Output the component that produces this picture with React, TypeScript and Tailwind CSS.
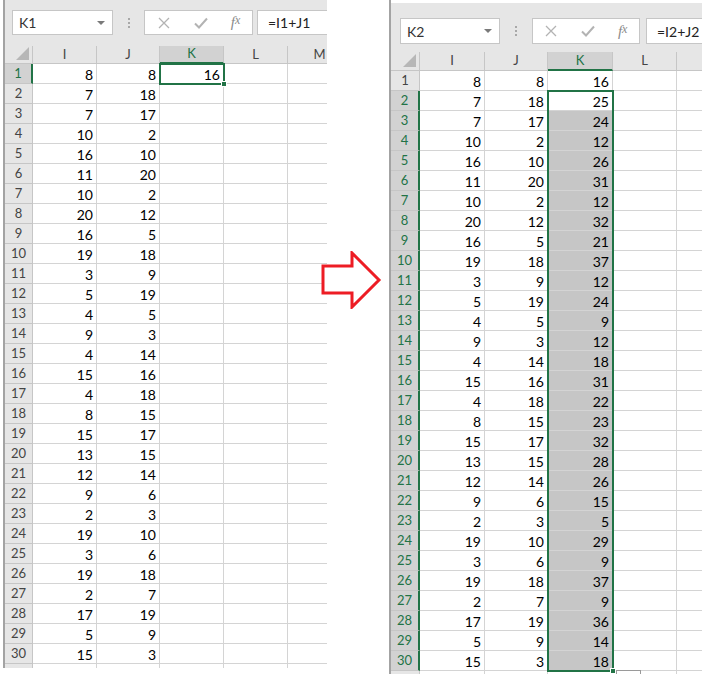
import React from "react";

const DATA: [number, number][] = [
  [8, 8], [7, 18], [7, 17], [10, 2], [16, 10], [11, 20], [10, 2], [20, 12], [16, 5], [19, 18],
  [3, 9], [5, 19], [4, 5], [9, 3], [4, 14], [15, 16], [4, 18], [8, 15], [15, 17], [13, 15],
  [12, 14], [9, 6], [2, 3], [19, 10], [3, 6], [19, 18], [2, 7], [17, 19], [5, 9], [15, 3],
];

const GREEN = "text-[#217346]";

type Col = { name: string; w: string };

type SheetProps = {
  panel: string;
  toolbar: string;
  nameBox: string;
  dots: string;
  fxBox: string;
  formulaBox: string;
  nameRef: string;
  formula: string;
  rowHeadW: string;
  headH: string;
  cols: Col[];
  kRows: number; // how many rows show a value in K
  selFrom: number;
  selTo: number;
  selBox: string;
  fillOptions?: string;
};

function XIcon() {
  return (
    <svg width="14" height="14" viewBox="0 0 14 14">
      <path d="M2 2 L12 12 M12 2 L2 12" stroke="#b3b3b3" strokeWidth="1.3" fill="none" />
    </svg>
  );
}

function CheckIcon() {
  return (
    <svg width="16" height="14" viewBox="0 0 16 14">
      <path d="M2 7.5 L6 11.5 L14 2.5" stroke="#b3b3b3" strokeWidth="2" fill="none" />
    </svg>
  );
}

function Sheet(p: SheetProps) {
  // 30 data rows plus one cut-off row at the bottom
  const rows = Array.from({ length: 31 }, (_, i) => i + 1);
  return (
    <div className={`${p.panel} flex shrink-0 flex-col overflow-hidden border-l-2 border-[#a3a3a3] bg-white`}>
      {/* formula bar */}
      <div className={`${p.toolbar} flex shrink-0 items-start bg-[#e6e6e6]`}>
        <div className={`${p.nameBox} flex shrink-0 items-center justify-between border border-[#c6c6c6] bg-white pl-[6px] pr-[7px] text-[14px] text-[#333]`}>
          <span>{p.nameRef}</span>
          <span className="h-0 w-0 border-x-[4px] border-t-[4px] border-x-transparent border-t-[#7a7a7a]" />
        </div>
        <div className={`${p.dots} flex shrink-0 flex-col items-center justify-center gap-[2px]`}>
          <span className="h-[2px] w-[2px] bg-[#a8a8a8]" />
          <span className="h-[2px] w-[2px] bg-[#a8a8a8]" />
          <span className="h-[2px] w-[2px] bg-[#a8a8a8]" />
        </div>
        <div className={`${p.fxBox} flex shrink-0 items-center border border-[#c6c6c6] bg-white`}>
          <span className="flex w-[37px] justify-center"><XIcon /></span>
          <span className="flex w-[37px] justify-center"><CheckIcon /></span>
          <span className="flex w-[33px] justify-center font-['Liberation_Serif',serif] text-[15px] italic text-[#8a8a8a]">
            f<span className="text-[12px]">x</span>
          </span>
        </div>
        <div className={`${p.formulaBox} flex shrink-0 items-center border border-[#c6c6c6] bg-white pl-[10px] text-[14px] text-[#222]`}>
          {p.formula}
        </div>
      </div>

      {/* column headers */}
      <div className={`${p.headH} flex w-max shrink-0`}>
        <div className={`${p.rowHeadW} relative shrink-0 border-r border-b border-[#c6c6c6] bg-[#e6e6e6]`}>
          <span className="absolute bottom-[3px] right-[3px] h-0 w-0 border-b-[13px] border-l-[13px] border-l-transparent border-b-[#b7b7b7]" />
        </div>
        {p.cols.map((c, i) => (
          <div
            key={c.name + i}
            className={`${c.w} flex shrink-0 items-center justify-center border-r border-[#c6c6c6] text-[13px] ${
              i === 2 ? `border-b-2 border-b-[#217346] bg-[#d2d2d2] ${GREEN}` : "border-b bg-[#e6e6e6] text-[#444]"
            }`}
          >
            {c.name}
          </div>
        ))}
      </div>

      {/* grid */}
      <div className="relative flex w-max flex-col">
        {rows.map((r) => {
          const sel = r >= p.selFrom && r <= p.selTo;
          const d = DATA[r - 1];
          return (
            <div key={r} className="flex h-[20px] shrink-0">
              <div
                className={`${p.rowHeadW} flex shrink-0 items-center justify-center border-b border-[#c6c6c6] text-[13px] ${
                  sel ? `border-r-2 border-r-[#217346] bg-[#d2d2d2] ${GREEN}` : "border-r bg-[#e6e6e6] text-[#444]"
                }`}
              >
                {d ? r : ""}
              </div>
              {p.cols.map((c, i) => {
                let v: number | string = "";
                if (d && i === 0) v = d[0];
                if (d && i === 1) v = d[1];
                if (d && i === 2 && r <= p.kRows) v = d[0] + d[1];
                const shaded = i === 2 && sel && r > p.selFrom;
                return (
                  <div
                    key={c.name + i}
                    className={`${c.w} flex shrink-0 items-center justify-end border-r border-b border-[#d4d4d4] pr-[3px] pt-[2px] text-[14px] leading-none text-black ${
                      shaded ? "bg-[#c6c6c6]" : "bg-white"
                    }`}
                  >
                    {v}
                  </div>
                );
              })}
            </div>
          );
        })}

        {/* selection border + fill handle */}
        <div className={`${p.selBox} absolute border-2 border-[#217346]`}>
          <span className="absolute -bottom-[4px] -right-[4px] h-[6px] w-[6px] border border-white bg-[#217346]" />
        </div>

        {p.fillOptions && (
          <div className={`${p.fillOptions} absolute flex h-[14px] w-[25px] items-start justify-center border border-[#9a9a9a] bg-white pt-[3px]`}>
            <span className="h-[2px] w-[8px] bg-[#e8a33c]" />
          </div>
        )}
      </div>
    </div>
  );
}

function Arrow() {
  return (
    <svg
      className="absolute left-[321px] top-[251px]"
      width="62"
      height="58"
      viewBox="0 0 62 58"
    >
      <polygon
        points="2,15 31,15 31,2 58,29 31,56 31,42 2,42"
        fill="white"
        stroke="#ed1c24"
        strokeWidth="3"
        strokeLinejoin="miter"
      />
    </svg>
  );
}

export default function App() {
  return (
    <div className="relative flex h-[674px] w-[702px] items-start overflow-hidden bg-white font-['Lato','Liberation_Sans',sans-serif]">
      <div className="ml-[3px]">
        <Sheet
          panel="w-[324px] h-[668px]"
          toolbar="h-[46px] pt-[10px]"
          nameBox="ml-[7px] h-[25px] w-[101px]"
          dots="h-[25px] w-[31px]"
          fxBox="h-[25px] w-[109px]"
          formulaBox="ml-[4px] h-[25px] w-[120px]"
          nameRef="K1"
          formula="=I1+J1"
          rowHeadW="w-[28px]"
          headH="h-[18px]"
          cols={[
            { name: "I", w: "w-[64px]" },
            { name: "J", w: "w-[63px]" },
            { name: "K", w: "w-[64px]" },
            { name: "L", w: "w-[64px]" },
            { name: "M", w: "w-[64px]" },
          ]}
          kRows={1}
          selFrom={1}
          selTo={1}
          selBox="left-[154px] -top-[1px] h-[22px] w-[66px]"
        />
      </div>
      <div className="ml-[62px] flex flex-col">
        <Sheet
          panel="w-[313px] h-[674px]"
          toolbar="h-[52px] pt-[15px] border-t-[3px] border-t-white"
          nameBox="ml-[9px] h-[26px] w-[100px]"
          dots="h-[26px] w-[32px]"
          fxBox="h-[26px] w-[108px]"
          formulaBox="ml-[6px] h-[26px] w-[80px]"
          nameRef="K2"
          formula="=I2+J2"
          rowHeadW="w-[29px]"
          headH="h-[19px]"
          cols={[
            { name: "I", w: "w-[65px]" },
            { name: "J", w: "w-[63px]" },
            { name: "K", w: "w-[65px]" },
            { name: "L", w: "w-[64px]" },
            { name: "", w: "w-[64px]" },
          ]}
          kRows={30}
          selFrom={2}
          selTo={30}
          selBox="left-[156px] top-[19px] h-[582px] w-[67px]"
          fillOptions="left-[225px] top-[599px]"
        />
      </div>
      <Arrow />
    </div>
  );
}
